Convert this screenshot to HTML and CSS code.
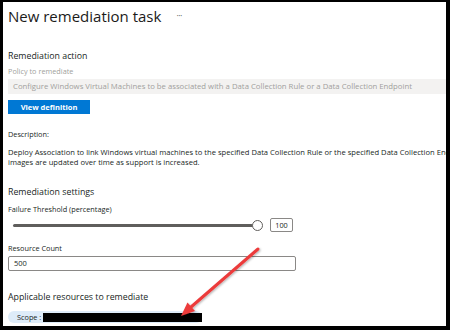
FILE: index.html
```html
<!DOCTYPE html>
<html>
<head>
<meta charset="utf-8">
<link rel="stylesheet" href="styles.css">
</head>
<body>
<div class="frame">
  <div class="page">
    <div class="title-row">
      <h1 class="title">New remediation task</h1>
      <span class="more">···</span>
    </div>
    <h2 class="section first">Remediation action</h2>
    <div class="label muted policy">Policy to remediate</div>
    <div class="field-disabled">Configure Windows Virtual Machines to be associated with a Data Collection Rule or a Data Collection Endpoint</div>
    <button class="btn">View definition</button>
    <div class="label desc-label">Description:</div>
    <p class="desc">Deploy Association to link Windows virtual machines to the specified Data Collection Rule or the specified Data Collection Endpoint. The list of OS<br>images are updated over time as support is increased.</p>
    <h2 class="section settings">Remediation settings</h2>
    <div class="label fail-label">Failure Threshold (percentage)</div>
    <div class="slider-row">
      <div class="slider"><div class="track"></div><div class="thumb"></div></div>
      <div class="num-box">100</div>
    </div>
    <div class="label rc-label">Resource Count</div>
    <div class="text-box">500</div>
    <h2 class="section applicable">Applicable resources to remediate</h2>
    <div class="scope-pill"><span>Scope :</span><span class="redact"></span></div>
  </div>
  <svg class="arrow" width="450" height="330" viewBox="0 0 450 330">
    <defs>
      <filter id="sh" x="-20%" y="-20%" width="140%" height="140%">
        <feDropShadow dx="1" dy="1" stdDeviation="0.8" flood-color="#000" flood-opacity="0.3"/>
      </filter>
    </defs>
    <g filter="url(#sh)">
      <line x1="258" y1="249" x2="191" y2="307" stroke="#ec3b3b" stroke-width="3" stroke-linecap="round"/>
      <polygon points="181,316 187.5,302.5 195,311" fill="#ec3b3b"/>
    </g>
  </svg>
</div>
</body>
</html>
```
FILE: styles.css
```css
* { box-sizing: border-box; }
html, body { margin: 0; padding: 0; }
body {
  background: #000;
  width: 450px;
  height: 330px;
  overflow: hidden;
  font-family: "Open Sans", "Noto Sans", sans-serif;
  color: #201f1e;
}
.frame {
  position: relative;
  margin: 2px 4px 0 3px;
  width: 443px;
  height: 324px;
  background: #fff;
  overflow: hidden;
}
.page {
  padding: 4px 0 0 5px;
  width: 600px;
}
.title-row {
  display: flex;
  align-items: center;
  height: 20px;
}
.title {
  margin: 0;
  font-size: 15px;
  line-height: 20px;
  font-weight: 400;
  color: #1b1a19;
}
.more {
  margin-left: 15px;
  font-size: 9px;
  color: #605e5c;
  letter-spacing: -0.5px;
  line-height: 20px;
}
.section {
  margin: 0;
  font-size: 8.8px;
  font-weight: 400;
  color: #201f1e;
  line-height: 12px;
}
.first { margin-top: 24px; }
.label {
  font-size: 7.3px;
  line-height: 10px;
  color: #201f1e;
}
.muted { color: #a19f9d; }
.policy { margin-top: 4px; }
.field-disabled {
  margin-top: 3px;
  height: 15px;
  width: 441px;
  background: #f3f2f1;
  color: #a19f9d;
  font-size: 7.75px;
  line-height: 15px;
  padding-left: 5px;
  white-space: nowrap;
}
.btn {
  display: block;
  margin-top: 6px;
  width: 82px;
  height: 14px;
  padding: 0;
  border: 0;
  background: #0078d4;
  color: #fff;
  font-family: inherit;
  font-size: 7.5px;
  font-weight: 700;
  line-height: 14px;
}
.desc-label { margin-top: 15px; }
.desc {
  margin: 8px 0 0;
  font-size: 7.6px;
  line-height: 10px;
  white-space: nowrap;
  color: #201f1e;
}
.settings { margin-top: 19px; }
.fail-label { margin-top: 6px; }
.slider-row {
  display: flex;
  align-items: center;
  margin-top: 4px;
  height: 14px;
}
.slider {
  width: 258px;
  height: 12px;
  display: flex;
  align-items: center;
  padding-left: 5px;
}
.track {
  width: 240px;
  height: 3px;
  background: #5f5e5c;
  border-radius: 2px;
}
.thumb {
  width: 11px;
  height: 11px;
  border: 1px solid #605e5c;
  border-radius: 50%;
  background: #fff;
  margin-left: -1px;
}
.num-box {
  margin-left: 4px;
  width: 23px;
  height: 14px;
  border: 1px solid #8a8886;
  border-radius: 2px;
  font-size: 7.3px;
  line-height: 12px;
  text-align: center;
  color: #201f1e;
}
.rc-label { margin-top: 11px; }
.text-box {
  margin-top: 3px;
  width: 288px;
  height: 15px;
  border: 1px solid #8a8886;
  border-radius: 2px;
  font-size: 7.5px;
  line-height: 13px;
  padding-left: 5px;
}
.applicable { margin-top: 20px; }
.scope-pill {
  display: inline-flex;
  align-items: center;
  margin-top: 7px;
  height: 12px;
  padding-left: 9px;
  background: #deecf9;
  border-radius: 6px;
  font-size: 7.3px;
  color: #201f1e;
}
.redact {
  display: inline-block;
  width: 159px;
  height: 9px;
  background: #000;
  margin-left: 2px;
}
.arrow {
  position: absolute;
  left: -3px;
  top: -2px;
  pointer-events: none;
}
```
